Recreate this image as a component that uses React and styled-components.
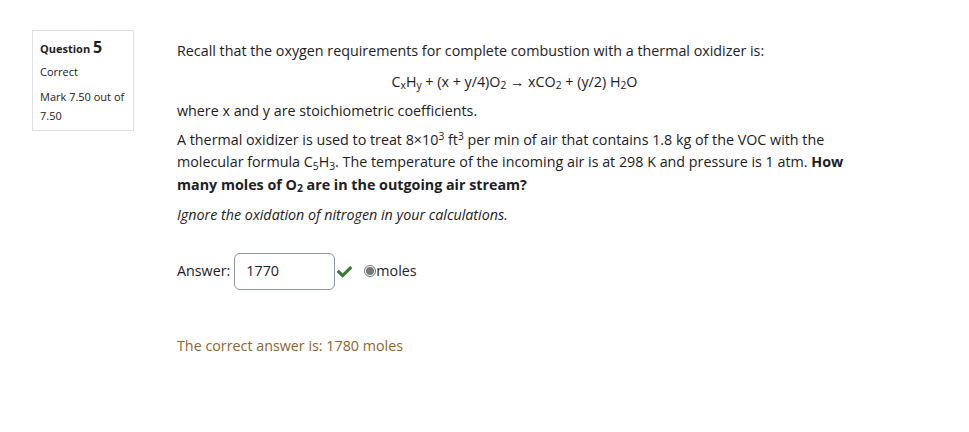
import styled, { createGlobalStyle } from "styled-components";

const Global = createGlobalStyle`
  body { margin: 0; background: #fff; color: #1d2125; font-family: "Open Sans", sans-serif; }
  sub, sup { font-size: 0.72em; line-height: 0; position: relative; vertical-align: baseline; }
  sub { bottom: -0.25em; }
  sup { top: -0.45em; }
`;

const Page = styled.div`
  display: flex;
  align-items: flex-start;
  padding: 30px 0 0 32px;
  width: 969px;
  height: 432px;
  box-sizing: border-box;
`;

const InfoBox = styled.div`
  width: 102px;
  height: 101px;
  box-sizing: border-box;
  border: 1px solid #dee2e6;
  padding: 6px 3px 6px 7px;
  font-size: 11px;
  line-height: 19px;
  color: #1d2125;
`;

const QTitle = styled.h3`
  margin: 0 0 3px;
  font-size: 11px;
  line-height: 20px;
  font-weight: 700;
  span { font-size: 16px; }
`;

const InfoLine = styled.div`
  margin-bottom: 6px;
`;

const Content = styled.div`
  margin-left: 43px;
  width: 675px;
  font-size: 14.3px;
  line-height: 22.5px;
  padding-top: 10px;
`;

const P = styled.p`
  margin: 0 0 ${(p) => p.$mb ?? 8}px;
  text-align: ${(p) => (p.$center ? "center" : "left")};
  font-style: ${(p) => (p.$italic ? "italic" : "normal")};
`;

const AnswerRow = styled.div`
  display: flex;
  align-items: center;
  margin-top: 26px;
`;

const Label = styled.span`
  margin-right: 4px;
`;

const Input = styled.div`
  width: 101px;
  height: 37px;
  box-sizing: border-box;
  border: 1px solid #8f959e;
  border-radius: 6px;
  padding: 0 11px;
  display: flex;
  align-items: center;
`;

const Tick = styled.svg`
  width: 15px;
  height: 13px;
  margin-left: 2px;
  fill: #357a32;
`;

const Radio = styled.span`
  width: 12px;
  height: 12px;
  border-radius: 50%;
  border: 1px solid #767676;
  box-sizing: border-box;
  display: inline-flex;
  align-items: center;
  justify-content: center;
  margin-left: 12px;
  margin-right: 0;
  &::after {
    content: "";
    width: 8px;
    height: 8px;
    border-radius: 50%;
    background: #767676;
  }
`;

const Feedback = styled.div`
  margin-top: 45px;
  color: #8e662e;
`;

export default function App() {
  return (
    <>
      <Global />
      <Page>
        <InfoBox>
          <QTitle>Question <span>5</span></QTitle>
          <InfoLine>Correct</InfoLine>
          <InfoLine>Mark 7.50 out of 7.50</InfoLine>
        </InfoBox>
        <Content>
          <P>Recall that the oxygen requirements for complete combustion with a thermal oxidizer is:</P>
          <P $center $mb={7}>
            C<sub>x</sub>H<sub>y</sub> + (x + y/4)O<sub>2</sub> → xCO<sub>2</sub> + (y/2) H<sub>2</sub>O
          </P>
          <P $mb={6}>where x and y are stoichiometric coefficients.</P>
          <P>
            A thermal oxidizer is used to treat 8×10<sup>3</sup> ft<sup>3</sup> per min of air that contains 1.8 kg of the VOC with the molecular formula C<sub>5</sub>H<sub>3</sub>. The temperature of the incoming air is at 298 K and pressure is 1 atm. <b>How many moles of O<sub>2</sub> are in the outgoing air stream?</b>
          </P>
          <P $italic>Ignore the oxidation of nitrogen in your calculations.</P>
          <AnswerRow>
            <Label>Answer:</Label>
            <Input>1770</Input>
            <Tick viewBox="0 0 512 420">
              <path d="M173.9 407.4L7.5 241c-10-10-10-26.2 0-36.2l36.2-36.2c10-10 26.2-10 36.2 0L192 280.7 432.1 40.6c10-10 26.2-10 36.2 0l36.2 36.2c10 10 10 26.2 0 36.2L210.1 407.4c-10 10-26.2 10-36.2 0z" />
            </Tick>
            <Radio />
            moles
          </AnswerRow>
          <Feedback>The correct answer is: 1780 moles</Feedback>
        </Content>
      </Page>
    </>
  );
}
